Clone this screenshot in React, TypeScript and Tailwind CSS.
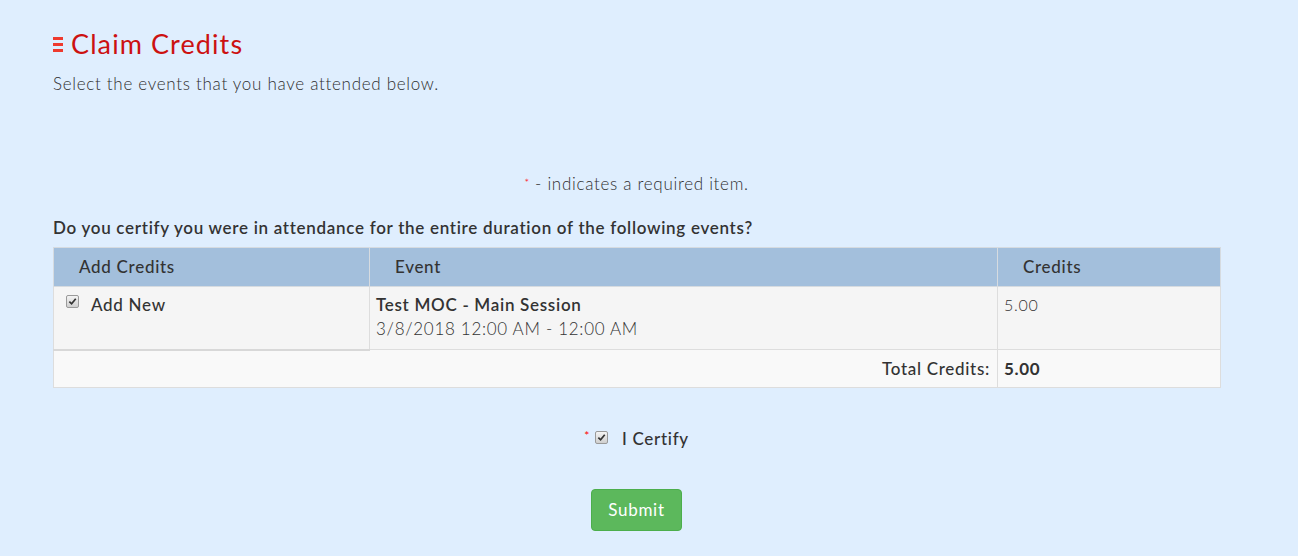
import React from "react";

function Check({ className = "" }: { className?: string }) {
  return (
    <span
      className={
        "inline-flex h-[13px] w-[13px] shrink-0 items-center justify-center rounded-[2px] border border-[#9a9a9a] bg-gradient-to-b from-[#f4f4f4] to-[#cfcfcf] " +
        className
      }
    >
      <svg viewBox="0 0 10 10" className="h-[9px] w-[9px]">
        <path d="M1.5 5.2 L4 7.6 L8.6 2" fill="none" stroke="#333" strokeWidth="1.9" />
      </svg>
    </span>
  );
}

export default function App() {
  return (
    <div className="min-h-[556px] bg-[#dfeefe] font-['Lato',sans-serif] tracking-[0.7px] text-[#333]">
      <div className="ml-[53px] w-[1167px] pt-[28px]">
        <h1 className="flex items-center gap-[8px] text-[27px] leading-[32px] font-normal tracking-[1.1px] text-[#cc1111]">
          <span className="flex flex-col gap-[3px] pt-[1px]">
            <span className="block h-[3px] w-[10px] bg-[#ee3a2e]" />
            <span className="block h-[3px] w-[10px] bg-[#ee3a2e]" />
            <span className="block h-[3px] w-[10px] bg-[#ee3a2e]" />
          </span>
          <span>Claim Credits</span>
        </h1>
        <p className="mt-[12px] text-[17px] leading-[24px] font-light text-[#2f2f2f]">
          Select the events that you have attended below.
        </p>

        <p className="mt-[76px] text-center text-[17px] leading-[24px] font-light text-[#2f2f2f]">
          <span className="relative -top-[3px] mr-[5px] text-[12px] text-[#ff0000]">*</span>- indicates a required item.
        </p>

        <p className="mt-[18px] text-[17px] leading-[24px] font-semibold text-[#333]">
          Do you certify you were in attendance for the entire duration of the following events?
        </p>

        <table className="mt-[7px] w-[1167px] table-fixed border-collapse text-[17px]">
          <colgroup>
            <col className="w-[316px]" />
            <col className="w-[628px]" />
            <col className="w-[223px]" />
          </colgroup>
          <thead>
            <tr className="h-[39px] bg-[#a3bfdc]">
              <th className="border border-[#d6dbe0] pl-[25px] text-left font-medium leading-[24px]">Add Credits</th>
              <th className="border border-[#d6dbe0] pl-[25px] text-left font-medium leading-[24px]">Event</th>
              <th className="border border-[#d6dbe0] pl-[25px] text-left font-medium leading-[24px]">Credits</th>
            </tr>
          </thead>
          <tbody>
            <tr className="bg-[#f5f5f5]">
              <td className="border-x border-t border-[#dddddd] border-b-2 border-b-[#d8d8d8] p-0 align-top">
                <div className="flex items-start gap-[12px] pl-[12px] pt-[6px]">
                  <Check className="mt-[2px]" />
                  <span className="leading-[24px] font-medium">Add New</span>
                </div>
              </td>
              <td className="border border-[#dddddd] pl-[6px] pt-[6px] pb-[8px] align-top">
                <div className="leading-[24px] font-semibold">Test MOC - Main Session</div>
                <div className="leading-[24px] font-light">3/8/2018 12:00 AM - 12:00 AM</div>
              </td>
              <td className="border border-[#dddddd] pl-[6px] pt-[6px] align-top">
                <div className="leading-[24px] text-[16px] font-light">5.00</div>
              </td>
            </tr>
            <tr className="h-[38px] bg-[#f9f9f9]">
              <td colSpan={2} className="border border-[#dddddd] pr-[7px] text-right font-medium leading-[24px]">
                Total Credits:
              </td>
              <td className="border border-[#dddddd] pl-[6px] font-bold leading-[24px]">5.00</td>
            </tr>
          </tbody>
        </table>

        <div className="mt-[39px] flex items-center justify-center">
          <span className="relative -top-[3px] mr-[5px] text-[12px] text-[#ff0000]">*</span>
          <Check className="relative -top-[2px]" />
          <span className="ml-[14px] text-[17px] leading-[24px] font-medium">I Certify</span>
        </div>

        <div className="mt-[38px] flex justify-center">
          <button className="h-[42px] w-[91px] rounded-[4px] border border-[#4cae4c] bg-[#5cb85c] text-[17px] text-white">
            Submit
          </button>
        </div>
      </div>
    </div>
  );
}
